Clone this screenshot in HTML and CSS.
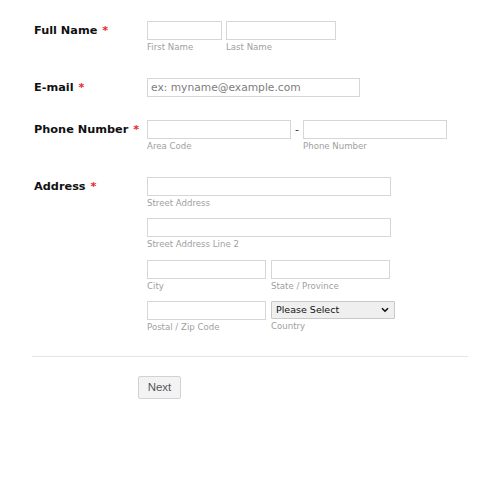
FILE: index.html
```html
<!DOCTYPE html>
<html lang="en">
<head>
  <meta charset="UTF-8">
  <title>Form</title>
  <link rel="stylesheet" href="styles.css">
</head>
<body>
<form class="form">
  <ul class="form-list">
    <li class="form-line">
      <label class="form-label">Full Name <span class="required">*</span></label>
      <div class="form-input">
        <span class="sub">
          <input type="text" class="text w-first">
          <label class="sublabel">First Name</label>
        </span>
        <span class="sub">
          <input type="text" class="text w-last">
          <label class="sublabel">Last Name</label>
        </span>
      </div>
    </li>
    <li class="form-line line-email">
      <label class="form-label">E-mail <span class="required">*</span></label>
      <div class="form-input">
        <input type="text" class="text w-email" placeholder="ex: myname@example.com">
      </div>
    </li>
    <li class="form-line">
      <label class="form-label">Phone Number <span class="required">*</span></label>
      <div class="form-input">
        <span class="sub">
          <input type="text" class="text w-phone">
          <label class="sublabel">Area Code</label>
        </span>
        <span class="dash">-</span>
        <span class="sub">
          <input type="text" class="text w-phone">
          <label class="sublabel">Phone Number</label>
        </span>
      </div>
    </li>
    <li class="form-line line-address">
      <label class="form-label">Address <span class="required">*</span></label>
      <div class="address">
        <div class="addr-row">
          <span class="sub">
            <input type="text" class="text w-full">
            <label class="sublabel">Street Address</label>
          </span>
        </div>
        <div class="addr-row">
          <span class="sub">
            <input type="text" class="text w-full">
            <label class="sublabel">Street Address Line 2</label>
          </span>
        </div>
        <div class="addr-row">
          <span class="sub">
            <input type="text" class="text w-half">
            <label class="sublabel">City</label>
          </span>
          <span class="sub">
            <input type="text" class="text w-half">
            <label class="sublabel">State / Province</label>
          </span>
        </div>
        <div class="addr-row last">
          <span class="sub">
            <input type="text" class="text w-half">
            <label class="sublabel">Postal / Zip Code</label>
          </span>
          <span class="sub">
            <span class="select-wrap">
              <select class="country">
                <option>Please Select</option>
                <option>United States</option>
                <option>Canada</option>
              </select>
              <svg class="chevron" width="8" height="6" viewBox="0 0 8 6">
                <path d="M1 1.2 L4 4.2 L7 1.2" fill="none" stroke="#111" stroke-width="1.6"/>
              </svg>
            </span>
            <label class="sublabel">Country</label>
          </span>
        </div>
      </div>
    </li>
  </ul>
  <div class="divider"></div>
  <div class="buttons">
    <button type="button" class="next-btn">Next</button>
  </div>
</form>
</body>
</html>
```

FILE: styles.css
```css
body {
  margin: 0;
  background: #fff;
  font-family: 'DejaVu Sans', Verdana, sans-serif;
  color: #111;
}
.form {
  padding-top: 21px;
}
.form-list {
  list-style: none;
  margin: 0;
  padding: 0 0 0 34px;
}
.form-line {
  display: flex;
  align-items: flex-start;
  margin-bottom: 25px;
}
.line-email {
  margin-bottom: 23px;
}
.line-address {
  margin-bottom: 23px;
}
.form-label {
  width: 113px;
  flex-shrink: 0;
  padding-top: 3px;
  font-size: 11.3px;
  font-weight: bold;
  line-height: 14px;
  color: #111;
}
.required {
  color: #e8282b;
  font-weight: bold;
  margin-left: 1px;
}
.form-input {
  display: flex;
  align-items: flex-start;
}
.sub {
  display: flex;
  flex-direction: column;
  margin-right: 4px;
}
.text {
  box-sizing: border-box;
  height: 19px;
  margin: 0;
  padding: 0 3px;
  border: 1px solid #d6d6d6;
  background: #fff;
  font-family: 'DejaVu Sans', Verdana, sans-serif;
  font-size: 10.7px;
  color: #333;
  outline: none;
}
.text::placeholder {
  color: #7d7d7d;
}
.w-first { width: 75px; }
.w-last { width: 110px; }
.w-email { width: 213px; }
.w-phone { width: 144px; }
.w-full { width: 244px; }
.w-half { width: 119px; }
.sublabel {
  display: block;
  box-sizing: border-box;
  height: 13px;
  line-height: 13px;
  padding-top: 1px;
  font-size: 8.6px;
  color: #a0a0a0;
}
.dash {
  width: 8px;
  line-height: 19px;
  font-size: 11px;
  color: #333;
}
.address {
  display: flex;
  flex-direction: column;
}
.addr-row {
  display: flex;
  margin-bottom: 9.3px;
}
.addr-row.last {
  margin-bottom: 0;
}
.addr-row .sub {
  margin-right: 5px;
}
.select-wrap {
  position: relative;
  display: block;
}
.country {
  display: block;
  box-sizing: border-box;
  width: 124px;
  height: 18px;
  margin: 0;
  padding: 0 4px;
  border: 1px solid #c9c9c9;
  border-radius: 1px;
  background: #efefef;
  font-family: 'DejaVu Sans', Verdana, sans-serif;
  font-size: 9.5px;
  color: #111;
  appearance: none;
  -webkit-appearance: none;
}
.chevron {
  position: absolute;
  right: 6px;
  top: 6px;
}
.divider {
  height: 1px;
  margin: 0 32px;
  background: #e6e6e6;
}
.buttons {
  padding: 19px 0 0 138px;
}
.next-btn {
  box-sizing: border-box;
  width: 43px;
  height: 23px;
  padding: 0;
  border: 1px solid #d2d2d2;
  border-radius: 2px;
  background: #f3f3f3;
  font-family: 'Liberation Sans', Arial, sans-serif;
  font-size: 11.5px;
  color: #555;
  cursor: pointer;
}
```
